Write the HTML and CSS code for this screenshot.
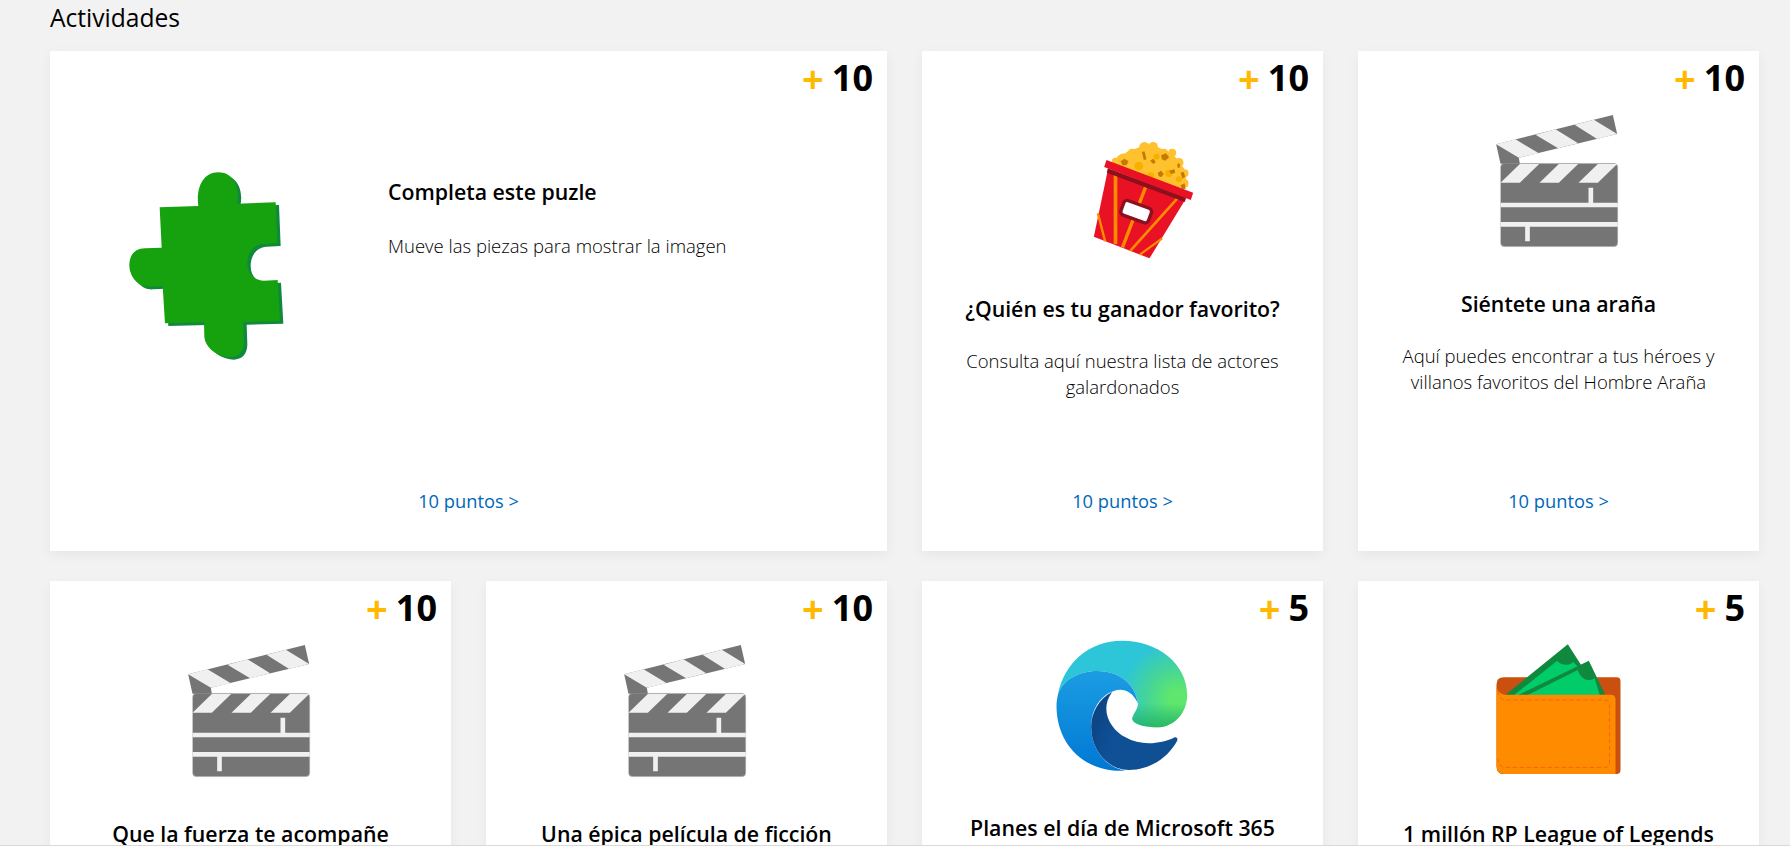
FILE: index.html
```html
<!DOCTYPE html>
<html lang="es">

<head>
    <title>Actividades</title>
    <link rel="stylesheet" href="styles.css">
</head>

<body>
    <svg class="defs" width="0" height="0">
        <defs>
            <g id="clapper">
                <rect x="180" y="370" width="352" height="250" rx="12" fill="#757575" stroke="#d4d4d4" stroke-width="1.5"/>
                <path d="M167 313 L517 225 L530 282 L235 353 L238 371 L180 371 Z" fill="#757575"/>
                <path d="M167 313 L225 298 L295 340 L235 353 Z M285 284 L345 268 L413 310 L353 325 Z M402 254 L460 239 L530 282 L470 297 Z" fill="#f0f0f0"/>
                <path d="M238 372 L296 372 L238 428 L180 428 Z M355 372 L413 372 L355 428 L297 428 Z M472 372 L530 372 L472 428 L414 428 Z" fill="#f0f0f0"/>
                <path d="M180 488 H532 V502 H180 Z M180 546 H532 V560 H180 Z M444 443 H458 V488 H444 Z M254 560 H268 V604 H254 Z" fill="#f0f0f0"/>
            </g>
            <radialGradient id="edgeTop" gradientUnits="userSpaceOnUse" cx="530" cy="235" r="170">
                <stop offset="0.15" stop-color="#5fe66e"/>
                <stop offset="0.55" stop-color="#44d49a"/>
                <stop offset="1" stop-color="#2dc5d8"/>
            </radialGradient>
            <linearGradient id="edgeShade" gradientUnits="userSpaceOnUse" x1="0" y1="250" x2="0" y2="325">
                <stop offset="0" stop-color="#1fae4a" stop-opacity="0"/>
                <stop offset="1" stop-color="#1fae4a" stop-opacity="0.75"/>
            </linearGradient>
            <linearGradient id="edgeBlue" x1="0" y1="0" x2="0" y2="1">
                <stop offset="0" stop-color="#1b9de2"/>
                <stop offset="1" stop-color="#0078d4"/>
            </linearGradient>
            <linearGradient id="edgeDark" x1="0" y1="0" x2="1" y2="0.3">
                <stop offset="0" stop-color="#0c3f7d"/>
                <stop offset="0.4" stop-color="#0f5096"/>
                <stop offset="1" stop-color="#0f4f92"/>
            </linearGradient>
        </defs>
    </svg>

    <div class="page">
        <h2 class="section-title">Actividades</h2>

        <div class="card-grid">
            <div class="card card-wide">
                <div class="points"><span class="plus">+</span>10</div>
                <div class="wide-body">
                    <svg class="art-puzzle" viewBox="30 -24 600 660">
                        <path transform="translate(10 8)" fill="#10893e" d="M149 142 L265 138 C258 90 275 37 325 37 C375 37 392 90 380 131 L497 127 L502 250 L460 252 C425 254 412 285 412 310 C412 340 432 362 462 362 L503 360 L510 483 L400 486 L402 545 C402 580 380 595 350 590 C315 585 285 560 283 530 L282 487 L165 490 L158 378 L120 380 C85 383 58 350 58 315 C58 285 75 265 105 265 L155 263 Z"/>
                        <path fill="#16a10f" d="M149 142 L265 138 C258 90 275 37 325 37 C375 37 392 90 380 131 L497 127 L502 250 L460 252 C425 254 412 285 412 310 C412 340 432 362 462 362 L503 360 L510 483 L400 486 L402 545 C402 580 380 595 350 590 C315 585 285 560 283 530 L282 487 L165 490 L158 378 L120 380 C85 383 58 350 58 315 C58 285 75 265 105 265 L155 263 Z"/>
                    </svg>
                    <div class="wide-text">
                        <h3 class="card-title">Completa este puzle</h3>
                        <p class="card-desc">Mueve las piezas para mostrar la imagen</p>
                    </div>
                </div>
                <a class="card-link" href="#">10 puntos &gt;</a>
            </div>

            <div class="card">
                <div class="points"><span class="plus">+</span>10</div>
                <svg class="art art-tall" viewBox="67.5 153 600 555">
                    <g fill="#ffc12e">
                        <path d="M340 370 L380 335 L420 320 L470 320 L520 345 L550 385 L562 440 L500 450 L340 390 Z"/>
                        <circle cx="432" cy="322" r="16"/>
                        <circle cx="458" cy="320" r="14"/>
                        <circle cx="395" cy="340" r="14"/>
                        <circle cx="372" cy="368" r="28"/>
                        <circle cx="345" cy="364" r="11"/>
                        <circle cx="490" cy="340" r="14"/>
                        <circle cx="515" cy="338" r="12"/>
                        <circle cx="535" cy="368" r="14"/>
                        <circle cx="552" cy="400" r="12"/>
                        <circle cx="552" cy="430" r="12"/>
                    </g>
                    <g fill="#f7b000">
                        <circle cx="415" cy="378" r="13"/>
                        <circle cx="468" cy="350" r="9"/>
                        <circle cx="505" cy="400" r="11"/>
                        <circle cx="450" cy="408" r="11"/>
                        <circle cx="535" cy="418" r="9"/>
                    </g>
                    <g fill="#c47a00">
                        <path d="M360 364 L372 356 L384 364 L378 376 L366 376 Z"/>
                        <path d="M424 336 L432 334 L438 358 L430 360 Z"/>
                        <path d="M449 362 L458 356 L466 366 L458 372 Z"/>
                        <path d="M482 346 L496 340 L506 352 L494 362 L484 358 Z"/>
                        <path d="M472 398 L482 392 L490 402 L482 412 L474 408 Z"/>
                        <path d="M506 392 L522 388 L524 398 L512 402 Z"/>
                        <path d="M540 398 L550 396 L554 410 L546 416 Z"/>
                        <path d="M540 436 L552 430 L556 446 L544 448 Z"/>
                        <path d="M530 372 L537 370 L539 382 L532 384 Z"/>
                    </g>
                    <path d="M322 390 L555 478 L447 655 L280 590 Z" fill="#e81224"/>
                    <g stroke="#ff8c00" fill="none">
                        <path d="M345 405 L345 612" stroke-width="11"/>
                        <path d="M435 442 L366 622" stroke-width="10"/>
                        <path d="M530 476 L390 632" stroke-width="8"/>
                        <path d="M292 520 L314 604" stroke-width="7"/>
                        <path d="M485 595 L418 644" stroke-width="7"/>
                    </g>
                    <path d="M322 385 L557 472 L553 486 L319 398 Z" fill="#8e0f1e"/>
                    <path d="M318 360 L578 458 L571 480 L311 381 Z" fill="#e81224"/>
                    <rect x="363" y="492" width="88" height="46" rx="11" transform="rotate(20 407 515)" fill="#fff" stroke="#8e0f1e" stroke-width="10"/>
                </svg>
                <h3 class="card-title">¿Quién es tu ganador favorito?</h3>
                <p class="card-desc">Consulta aquí nuestra lista de actores galardonados</p>
                <a class="card-link" href="#">10 puntos &gt;</a>
            </div>

            <div class="card">
                <div class="points"><span class="plus">+</span>10</div>
                <svg class="art" viewBox="55.5 153 600 540"><use href="#clapper"/></svg>
                <h3 class="card-title">Siéntete una araña</h3>
                <p class="card-desc">Aquí puedes encontrar a tus héroes y villanos favoritos del Hombre Araña</p>
                <a class="card-link" href="#">10 puntos &gt;</a>
            </div>

            <div class="card">
                <div class="points"><span class="plus">+</span>10</div>
                <svg class="art" viewBox="55.5 153 600 540"><use href="#clapper"/></svg>
                <h3 class="card-title">Que la fuerza te acompañe</h3>
            </div>

            <div class="card">
                <div class="points"><span class="plus">+</span>10</div>
                <svg class="art" viewBox="55.5 153 600 540"><use href="#clapper"/></svg>
                <h3 class="card-title">Una épica película de ficción</h3>
            </div>

            <div class="card">
                <div class="points"><span class="plus">+</span>5</div>
                <svg class="art art-short" viewBox="67.5 3 600 522">
                    <path fill="url(#edgeTop)" d="M412 250 C415 265 395 285 395 298 C400 315 440 322 470 322 C520 322 560 280 560 225 C560 130 470 62 365 62 C265 62 190 130 172 225 C185 180 235 153 290 153 C360 153 405 195 412 250 Z"/>
                    <path fill="url(#edgeShade)" d="M412 250 C415 265 395 285 395 298 C400 315 440 322 470 322 C520 322 560 280 560 225 L412 225 Z"/>
                    <path fill="url(#edgeBlue)" d="M172 225 C185 180 235 153 290 153 C360 153 405 195 412 250 C395 212 365 203 340 213 C300 225 272 270 272 320 C272 390 320 445 375 452 C260 460 168 380 168 258 C168 245 170 235 172 225 Z"/>
                    <path fill="url(#edgeDark)" d="M335 216 C295 235 272 280 272 320 C272 395 325 450 385 450 C450 450 505 410 530 362 C533 354 527 350 520 353 C480 372 420 378 375 352 C330 328 295 270 335 216 Z"/>
                </svg>
                <h3 class="card-title">Planes el día de Microsoft 365</h3>
            </div>

            <div class="card">
                <div class="points"><span class="plus">+</span>5</div>
                <svg class="art" viewBox="-4.5 3 600 540">
                    <path d="M130 172 H468 Q480 172 480 184 V450 Q480 462 468 462 H130 Q108 462 108 440 V194 Q108 172 130 172 Z" fill="#ca5010"/>
                    <path d="M133 226 L322 73 L420 226 Z" fill="#10893e"/>
                    <path d="M160 226 L290 122 C300 135 325 140 338 126 L352 140 L240 226 Z" fill="#00cc6a"/>
                    <path d="M172 226 L385 122 L435 226 Z" fill="#10893e"/>
                    <path d="M200 226 L352 150 C360 178 385 188 402 174 L418 226 Z" fill="#00cc6a"/>
                    <path d="M108 195 C108 212 120 224 135 224 H450 Q465 224 465 239 V462 H135 Q108 462 108 437 Z" fill="#ff8c00"/>
                    <path d="M112 212 Q116 240 135 240 H433 Q447 240 447 254 V428 Q447 442 433 442 H135 Q115 442 113 417" fill="none" stroke="#f7630c" stroke-width="3" stroke-dasharray="14 7"/>
                </svg>
                <h3 class="card-title">1 millón RP League of Legends</h3>
            </div>
        </div>
    </div>
</body>

</html>
```

FILE: styles.css
```css
html,
body {
    height: 100%;
    overflow: hidden;
}

body {
    font-family: "Open Sans", "Noto Sans", sans-serif;
    background-color: #f2f2f2;
    color: #000;
    margin: 0;
}

.defs {
    position: absolute;
}

.page {
    height: 845px;
    overflow: hidden;
    padding: 0 31px 0 50px;
    border-bottom: 1px solid #d9d9d9;
}

.section-title {
    font-size: 24.6px;
    font-weight: 400;
    line-height: 36px;
    margin: 0 0 15px;
}

.card-grid {
    display: grid;
    grid-template-columns: repeat(4, 401px);
    grid-auto-rows: 500px;
    column-gap: 35px;
    row-gap: 30px;
}

.card {
    position: relative;
    display: flex;
    flex-direction: column;
    align-items: center;
    padding: 40px 20px 37px;
    box-sizing: border-box;
    background-color: #fff;
    text-align: center;
    box-shadow: 0 4px 12px rgba(0, 0, 0, 0.05);
}

.card-wide {
    grid-column: span 2;
    padding: 0 0 37px;
}

.wide-body {
    display: flex;
    width: 100%;
    flex: 1;
    text-align: left;
}

.art-puzzle {
    width: 200px;
    height: 220px;
    margin: 101px 0 0 70px;
    flex-shrink: 0;
}

.wide-text {
    padding: 127px 0 0 68px;
}

.wide-text .card-title {
    margin-top: 0;
}

.wide-text .card-desc {
    margin-top: 27px;
}

.art {
    width: 200px;
    height: 180px;
    flex-shrink: 0;
}

.art-tall {
    height: 185px;
}

.art-short {
    height: 174px;
}

.points {
    position: absolute;
    top: 0;
    right: 14px;
    font-size: 36px;
    font-weight: 700;
    line-height: 54px;
    display: flex;
    align-items: center;
}

.plus {
    color: #ffb900;
    font-size: 38px;
    margin-right: 8px;
}

.card-title {
    font-size: 21.3px;
    font-weight: 600;
    line-height: 28px;
    margin: 19px 0 0;
}

.card-desc {
    font-size: 18.5px;
    font-weight: 300;
    line-height: 26px;
    margin: 25px 0 0;
}

.card-link {
    margin-top: auto;
    color: #0067b8;
    font-size: 18.3px;
    font-weight: 400;
    line-height: 26px;
    text-decoration: none;
}
```
